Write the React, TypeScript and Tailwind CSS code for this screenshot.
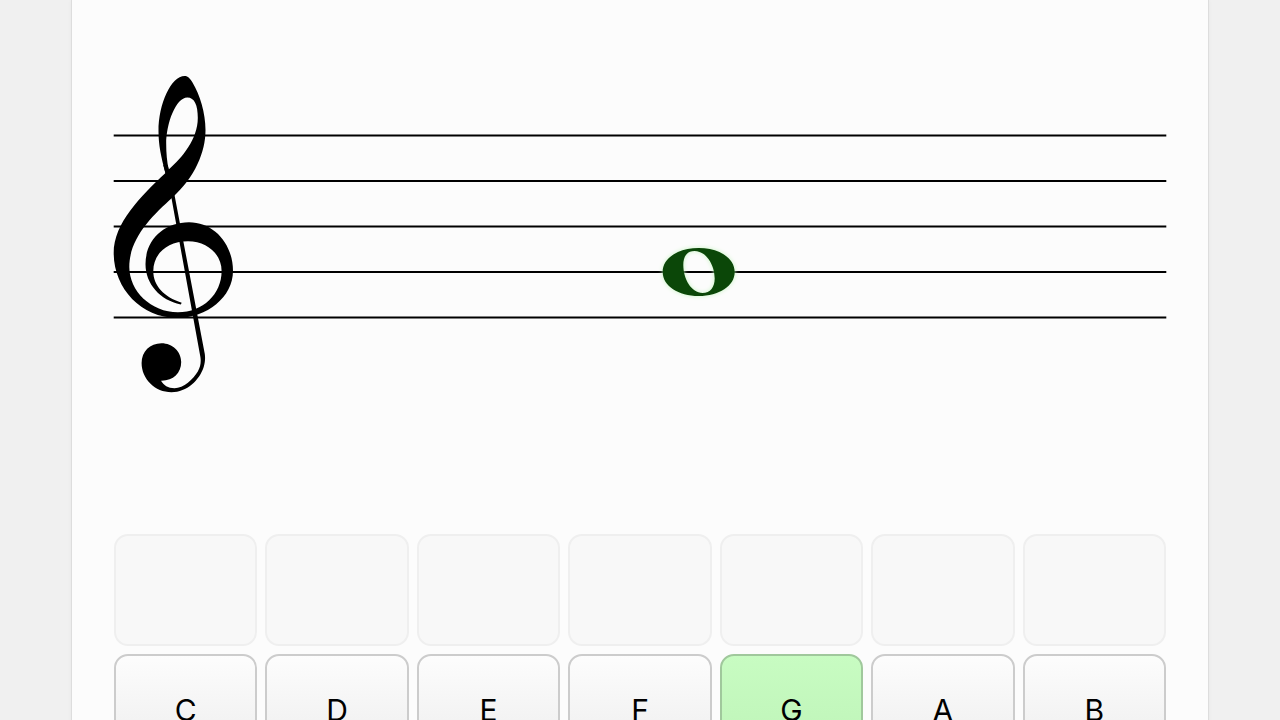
const STAFF_LINES = [135.5, 181, 226.5, 272, 317.5];
const NOTES = ['C', 'D', 'E', 'F', 'G', 'A', 'B'];
const CURRENT_NOTE = 'G';

function TrebleClef() {
  return (
    <g fill="#000">
      {/* upper loop and the broad stroke sweeping into the spiral */}
      <path
        fillRule="evenodd"
        d="M184.7 76 C188 76 190 78.500 192.500 82.500 C200 95 205.500 113 205.500 130 C205.500 152 195 177 172.500 197.500 C152 216 129.300 238 129.300 267 C129.300 291 151 312.300 178 312.300 C203 312.300 221.600 294 221.600 271 C221.600 254 207 241.200 188 241.200 C167 241.200 153.300 254 153.300 271 C153.300 286 164 297 181.700 302.700 L180.800 304.600 C160 300 145.500 284 145.500 264 C145.500 240 164 222.300 189 222.300 C214 222.300 233 244 233 271 C233 297 207 317.900 177 317.900 C141 317.900 113.700 288 113.700 253 C113.700 223 141 196 165.500 173 C161 157 158.500 145 158.500 131 C158.500 104 171 76 184.700 76 Z M168.700 169.500 C182 158 197.800 139 197.800 118 C197.800 105 194.500 97.500 187.300 97.500 C176 97.500 166.200 123 166.200 144 C166.200 153 167 162 168.700 169.500 Z"
      />
      {/* stem, hook and ball */}
      <path d="M163.300 165 L167.700 165 L174.700 196 L204.800 354 C205.300 358 205.200 362 203.700 367 C199.500 380 187 392.200 171.500 392.200 C155 392.200 141.600 379 141.600 363 C141.600 351.500 150 343.200 161.500 343.200 C172.500 343.200 181.200 351.500 181.200 362 C181.200 373 173 381 161 380.700 C163.500 385.200 168 388.200 174.500 388.200 C183.500 388.200 193.500 379 197.800 371.500 C200.500 367 201.200 362 200.400 357 L171.100 196 Z" />
    </g>
  );
}

function WholeNote() {
  return (
    <path
      fill="#0b4708"
      fillRule="evenodd"
      className="drop-shadow-[0_0_2px_#c4f5be]"
      d="M698.700 248 C719 248 734.700 258 734.700 272 C734.700 286 719 296 698.700 296 C678.400 296 662.700 286 662.700 272 C662.700 258 678.400 248 698.700 248 Z M694.500 251 C687 251 683.300 256.500 683.300 265 C683.300 279 691.500 293 702.500 293 C710.500 293 714.700 287 714.700 278.500 C714.700 264.500 706 251 694.500 251 Z"
    />
  );
}

function Staff() {
  return (
    <svg
      viewBox="114 60 1052 340"
      className="block w-full overflow-visible"
      role="img"
      aria-label="Treble clef staff with one whole note"
    >
      {STAFF_LINES.map((y) => (
        <line key={y} x1="113.700" x2="1166.300" y1={y} y2={y} stroke="#000" strokeWidth="1.9" />
      ))}
      <TrebleClef />
      <WholeNote />
    </svg>
  );
}

function NoteKey({ name, active }: { name: string; active: boolean }) {
  const tone = active
    ? 'border-[#a0c89c] bg-linear-to-b from-[#c8fcc2] to-[#bdf3b7]'
    : 'border-[#cccccc] bg-linear-to-b from-[#fdfdfd] to-[#ececec]';
  return (
    <button
      type="button"
      aria-pressed={active}
      className={`h-28 rounded-[14px] border-2 bg-origin-border text-3xl text-black ${tone}`}
    >
      {name}
    </button>
  );
}

export default function App() {
  return (
    <div className="h-screen overflow-y-auto bg-[#f0f0f0] px-[71px] font-['Inter',sans-serif] [scrollbar-width:none]">
      <main className="mx-auto min-h-full max-w-6xl border-x border-[#dddddd] bg-[#fcfcfc] px-[42px] pt-[60px] pb-10 shadow-[0_0_4px_rgba(0,0,0,0.04)]">
        <Staff />
        <div className="mt-[134px] grid grid-cols-7 gap-2">
          {NOTES.map((name) => (
            <div key={name} className="h-28 rounded-[14px] border-2 border-[#efefef] bg-[#f8f8f8]" />
          ))}
          {NOTES.map((name) => (
            <NoteKey key={name} name={name} active={name === CURRENT_NOTE} />
          ))}
        </div>
      </main>
    </div>
  );
}
